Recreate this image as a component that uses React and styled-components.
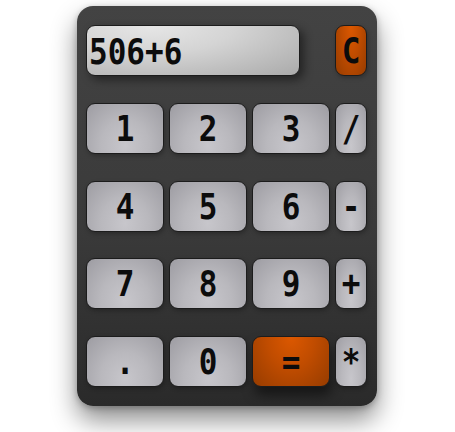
import React, { useState } from "react";
import styled, { createGlobalStyle, css } from "styled-components";

const GlobalStyle = createGlobalStyle`
  html, body {
    margin: 0;
    padding: 0;
    background: #ffffff;
  }
`;

const Page = styled.div`
  width: 455px;
  height: 432px;
  display: flex;
  justify-content: center;
  align-items: flex-start;
  padding: 6px 1px 0 0;
  box-sizing: border-box;
  overflow: hidden;
`;

const Body = styled.div`
  width: 300px;
  height: 400px;
  box-sizing: border-box;
  padding: 19px 8px 20px 9px;
  border-radius: 16px;
  background: linear-gradient(to bottom, #434343 0%, #3a3a3a 55%, #2a2a2a 100%);
  box-shadow: 0 14px 26px rgba(0, 0, 0, 0.45), 0 2px 6px rgba(0, 0, 0, 0.25);
  display: grid;
  grid-template-columns: 78px 78px 78px 32px;
  grid-template-rows: repeat(5, 51px);
  column-gap: 5px;
  row-gap: 26.75px;
  font-family: "DejaVu Sans Mono", "Liberation Mono", monospace;
  font-weight: bold;
`;

// tall, narrow digits like an old LCD bitmap face
const Glyph = styled.span`
  display: inline-block;
  transform: scaleY(1.16);
  transform-origin: center;
`;

const Display = styled.div`
  grid-column: 1 / 4;
  width: 214px;
  box-sizing: border-box;
  border: 1px solid #1c1c1c;
  border-radius: 9px;
  background: radial-gradient(ellipse at 30% 0%, #e6e6e6 0%, #d4d4d4 40%, #aaaaaa 100%);
  box-shadow: 4px 4px 10px rgba(0, 0, 0, 0.45);
  display: flex;
  align-items: center;
  padding-left: 2px;
  font-size: 31px;
  color: #0c0c0c;
  overflow: hidden;
  white-space: nowrap;
`;

const orange = css`
  background: radial-gradient(ellipse at 50% 0%, #dc5800 0%, #c04c00 45%, #963c00 100%);
`;

const grey = css`
  background: radial-gradient(ellipse at 50% 85%, #c7c6cb 0%, #b9b8bd 45%, #9d9ca2 100%);
`;

const Key = styled.button`
  grid-column: ${(p) => p.$col || "auto"};
  margin: 0;
  padding: 0;
  box-sizing: border-box;
  border: 1px solid #1c1c1c;
  border-radius: 9px;
  font-family: inherit;
  font-weight: bold;
  font-size: 31px;
  line-height: 1;
  color: #0c0c0c;
  cursor: pointer;
  display: flex;
  align-items: center;
  justify-content: center;
  ${(p) => (p.$accent ? orange : grey)}
  box-shadow: ${(p) =>
    p.$lifted ? "2px 8px 12px rgba(0, 0, 0, 0.5)" : "1px 2px 4px rgba(0, 0, 0, 0.25)"};
`;

const rows = [
  ["1", "2", "3", "/"],
  ["4", "5", "6", "-"],
  ["7", "8", "9", "+"],
  [".", "0", "=", "*"],
];

export default function App() {
  const [expr, setExpr] = useState("506+6");

  const press = (k) => {
    if (k === "=") {
      try {
        // eslint-disable-next-line no-new-func
        setExpr(String(Function(`return (${expr})`)()));
      } catch (e) {
        setExpr("Error");
      }
      return;
    }
    setExpr((s) => s + k);
  };

  return (
    <>
      <GlobalStyle />
      <Page>
        <Body>
          <Display>
            <Glyph>{expr}</Glyph>
          </Display>
          <Key $col="4" $accent onClick={() => setExpr("")}>
            <Glyph>C</Glyph>
          </Key>
          {rows.flat().map((k) => (
            <Key
              key={k}
              $accent={k === "="}
              $lifted={k === "="}
              onClick={() => press(k)}
            >
              <Glyph>{k}</Glyph>
            </Key>
          ))}
        </Body>
      </Page>
    </>
  );
}
